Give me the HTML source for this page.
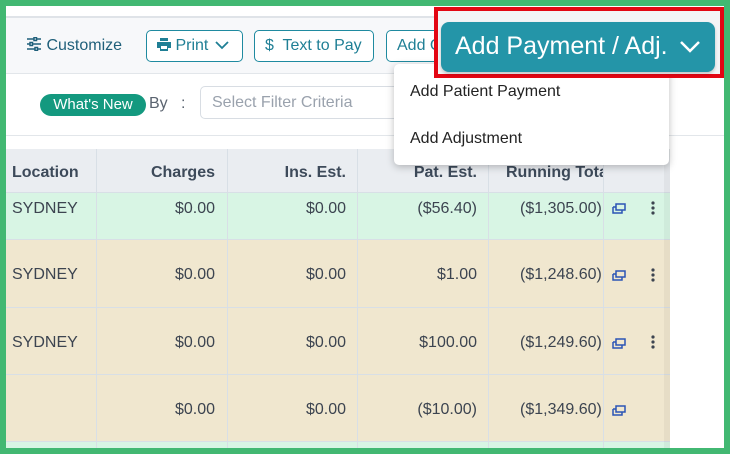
<!DOCTYPE html><html><head><style>
*{box-sizing:border-box;margin:0;padding:0}
body{width:730px;height:454px;overflow:hidden;background:#42b872;font-family:"Liberation Sans",sans-serif;position:relative}
.page{position:absolute;left:6px;top:6px;width:718px;height:442px;background:#fff;overflow:hidden}
.abs{position:absolute}
.tb{left:0;top:10px;width:718px;height:58px;background:#f7f8fa;border-top:2px solid #dfe3e8;border-bottom:1px solid #e2e6ea}
.btn{position:absolute;top:24px;height:32px;border:1px solid #1f8aa0;border-radius:5px;color:#1f7f95;font-size:16px;line-height:30px;padding-left:10px;background:#fff}
.cell{position:absolute;font-size:16px;color:#3c4450;white-space:nowrap}
.row{position:absolute;left:0;width:664px;border-bottom:1px solid #d8dfe6}
.vl{position:absolute;top:143px;width:1px;height:299px;background:#d8dfe6}
.rt{left:482px;width:115px;overflow:hidden;text-align:left;padding-left:32px}
</style></head><body><div class="page">
<div class="abs tb"></div>
<div class="abs" style="left:20px;top:31px;font-size:16px;color:#1f5f7a"><svg width="16" height="14" viewBox="0 0 16 14" style="vertical-align:-1px"><g stroke="#1f5f7a" stroke-width="1.6" fill="none"><path d="M1 2h14M1 7h14M1 12h14"/></g><g fill="#f7f8fa" stroke="#1f5f7a" stroke-width="1.5"><rect x="8" y="0.5" width="2.5" height="3"/><rect x="4" y="5.5" width="2.5" height="3"/><rect x="9" y="10.5" width="2.5" height="3"/></g></svg> Customize</div>
<div class="btn" style="left:140px;width:97px"><svg width="14" height="13" viewBox="0 0 14 13" style="vertical-align:-1px"><path d="M3 0h8v3H3z M0 4h14v6h-3v3H3v-3H0z" fill="#1f7f95"/><rect x="4" y="8" width="6" height="3" fill="#fff"/></svg> Print <svg width="14" height="9" viewBox="0 0 14 9" style="margin-left:2px"><path d="M1 1l6 6 6-6" fill="none" stroke="#1f7f95" stroke-width="1.8"/></svg></div>
<div class="btn" style="left:248px;width:120px">$&nbsp; Text to Pay</div>
<div class="btn" style="left:380px;width:60px">Add C</div>
<div class="abs" style="left:0;top:68px;width:718px;height:62px;border-bottom:1px solid #e2e6ea"></div>
<div class="abs" style="left:34px;top:88px;width:106px;height:22px;border-radius:11px;background:#14997f;color:#fff;font-size:15px;line-height:22px;text-align:center">What's New</div>
<div class="abs" style="left:143px;top:89px;font-size:16px;color:#5b6470">By &nbsp;&nbsp;:</div>
<div class="abs" style="left:194px;top:80px;width:200px;height:33px;border:1px solid #d8dde3;border-radius:5px;color:#9aa2ad;font-size:16px;line-height:31px;padding-left:11px">Select Filter Criteria</div>
<div class="row" style="top:143px;height:44px;background:#eaedf1"></div>
<div class="row" style="top:187px;height:47px;background:#d8f5e4"></div>
<div class="row" style="top:234px;height:68px;background:#f0e7cf"></div>
<div class="row" style="top:302px;height:67px;background:#f0e7cf"></div>
<div class="row" style="top:369px;height:67px;background:#f0e7cf"></div>
<div class="row" style="top:436px;height:10px;background:#d8f5e4"></div>
<div class="vl" style="left:90px"></div><div class="vl" style="left:221px"></div><div class="vl" style="left:351px"></div><div class="vl" style="left:482px"></div><div class="vl" style="left:597px"></div>
<div class="abs" style="left:658px;top:143px;width:6px;height:299px;background:rgba(0,0,0,0.04)"></div>
<div class="cell" style="left:6px;top:158px;font-weight:bold;color:#3d4a5a">Location</div>
<div class="cell" style="left:90px;width:119px;text-align:right;top:158px;font-weight:bold;color:#3d4a5a">Charges</div>
<div class="cell" style="left:221px;width:119px;text-align:right;top:158px;font-weight:bold;color:#3d4a5a">Ins. Est.</div>
<div class="cell" style="left:351px;width:120px;text-align:right;top:158px;font-weight:bold;color:#3d4a5a">Pat. Est.</div>
<div class="cell" style="left:500px;top:158px;font-weight:bold;color:#3d4a5a;width:97px;overflow:hidden">Running Total</div>

<div class="cell" style="left:6px;top:194px">SYDNEY</div><div class="cell" style="left:90px;width:119px;text-align:right;top:194px">$0.00</div><div class="cell" style="left:221px;width:119px;text-align:right;top:194px">$0.00</div><div class="cell" style="left:351px;width:120px;text-align:right;top:194px">($56.40)</div><div class="cell rt" style="top:194px">($1,305.00)</div>
<div class="cell" style="left:6px;top:260px">SYDNEY</div><div class="cell" style="left:90px;width:119px;text-align:right;top:260px">$0.00</div><div class="cell" style="left:221px;width:119px;text-align:right;top:260px">$0.00</div><div class="cell" style="left:351px;width:120px;text-align:right;top:260px">$1.00</div><div class="cell rt" style="top:260px">($1,248.60)</div>
<div class="cell" style="left:6px;top:328px">SYDNEY</div><div class="cell" style="left:90px;width:119px;text-align:right;top:328px">$0.00</div><div class="cell" style="left:221px;width:119px;text-align:right;top:328px">$0.00</div><div class="cell" style="left:351px;width:120px;text-align:right;top:328px">$100.00</div><div class="cell rt" style="top:328px">($1,249.60)</div>
<div class="cell" style="left:90px;width:119px;text-align:right;top:395px">$0.00</div><div class="cell" style="left:221px;width:119px;text-align:right;top:395px">$0.00</div><div class="cell" style="left:351px;width:120px;text-align:right;top:395px">($10.00)</div><div class="cell rt" style="top:395px">($1,349.60)</div>
<svg class="abs" style="left:606px;top:196px" width="14" height="240" viewBox="0 0 14 240"><g fill="none" stroke="#2b55b5" stroke-width="1.5"><path d="M4 2h9v6h-9z M1 5h3 M1 5v6h9v-3"/><path d="M4 69h9v6h-9z M1 72h3 M1 72v6h9v-3"/><path d="M4 137h9v6h-9z M1 140h3 M1 140v6h9v-3"/><path d="M4 204h9v6h-9z M1 207h3 M1 207v6h9v-3"/></g></svg>
<svg class="abs" style="left:645px;top:195px" width="4" height="160"><g fill="#3c4450"><circle cx="2" cy="2" r="1.6"/><circle cx="2" cy="7" r="1.6"/><circle cx="2" cy="12" r="1.6"/><circle cx="2" cy="69" r="1.6"/><circle cx="2" cy="74" r="1.6"/><circle cx="2" cy="79" r="1.6"/><circle cx="2" cy="136" r="1.6"/><circle cx="2" cy="141" r="1.6"/><circle cx="2" cy="146" r="1.6"/></g></svg>
<div class="abs" style="left:388px;top:58px;width:275px;height:101px;background:#fff;border-radius:5px;box-shadow:0 2px 8px rgba(0,0,0,0.25)"></div>
<div class="abs" style="left:404px;top:77px;font-size:16px;color:#222">Add Patient Payment</div>
<div class="abs" style="left:404px;top:124px;font-size:16px;color:#222">Add Adjustment</div>
<div class="abs" style="left:428px;top:1px;width:290px;height:71px;border:4px solid #e30613;background:#f3f4f6"></div>
<div class="abs" style="left:435px;top:16px;width:274px;height:50px;border-radius:8px;background:#2495a8;color:#fff;font-size:25px;line-height:48px;padding-left:14px;box-shadow:0 2px 3px rgba(0,0,0,0.2);white-space:nowrap">Add Payment / Adj. <svg width="22" height="14" viewBox="0 0 22 14" style="margin-left:4px"><path d="M2 2l9 9 9-9" fill="none" stroke="#fff" stroke-width="2.5"/></svg></div>
</div></body></html>
